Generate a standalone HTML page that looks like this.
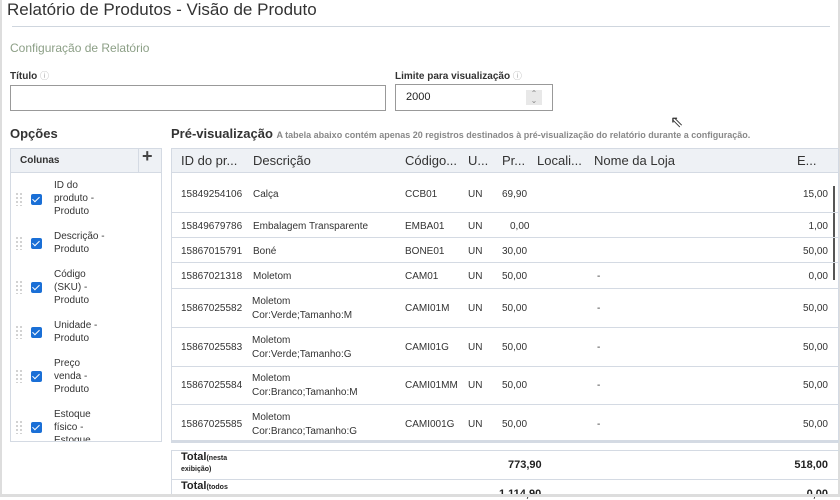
<!DOCTYPE html>
<html><head><meta charset="utf-8"><style>
*{margin:0;padding:0;box-sizing:border-box}
body{width:840px;height:497px;overflow:hidden;background:#fff;font-family:"Liberation Sans",Arial,sans-serif;color:#333;position:relative}
.a{position:absolute;white-space:nowrap}
.frame{position:absolute;left:0;top:0;width:840px;height:497px;border-left:2px solid #ddd;border-right:2px solid #ddd;border-bottom:3px solid #ddd}
.lbl{font-size:10px;font-weight:bold;color:#333}
.info{font-size:9px;color:#aaa;font-weight:normal}
.inp{position:absolute;border:1px solid #999;background:#fff}
.cb{position:absolute;left:31px;width:11px;height:11px;background:#1a6fd6;border-radius:2px}
.cb:after{content:"";position:absolute;left:3px;top:1px;width:3px;height:6px;border:solid #fff;border-width:0 1.5px 1.5px 0;transform:rotate(45deg)}
.dr{position:absolute;left:15px;width:8px;height:14px;background-image:radial-gradient(circle,#666 0.7px,transparent 0.8px);background-size:4px 4px}
.it{position:absolute;left:54px;font-size:10px;line-height:13px;color:#333}
.td{position:absolute;font-size:10px;color:#333;white-space:nowrap}
.hl{position:absolute;left:171px;width:667px;height:1px;background:#d4dae3}
.th{position:absolute;top:153px;font-size:13px;color:#333}
.r{position:absolute;left:0;top:2px;width:840px;height:300px}
</style></head><body>
<div class="frame"></div>
<div class="a" style="left:7px;top:0px;font-size:17px;color:#333">Relatório de Produtos - Visão de Produto</div>
<div class="a" style="left:12px;top:26px;width:818px;height:1px;background:#cfd6de"></div>
<div class="a" style="left:10px;top:41px;font-size:12px;color:#8c9f86">Configuração de Relatório</div>
<div class="a lbl" style="left:10px;top:69px">Título <span class="info">ⓘ</span></div>
<div class="inp" style="left:10px;top:85px;width:376px;height:26px"></div>
<div class="a lbl" style="left:395px;top:69px">Limite para visualização <span class="info">ⓘ</span></div>
<div class="inp" style="left:395px;top:84px;width:158px;height:27px"></div>
<div class="a" style="left:406px;top:91px;font-size:11px;color:#222">2000</div>
<div class="a" style="left:526px;top:90px;width:16px;height:15px;background:#e8e8e8;font-size:8px;color:#888;text-align:center;line-height:7px">⌃<br>⌄</div>
<div class="a" style="left:670px;top:112px;font-size:16px;color:#333">⇖</div>
<div class="a" style="left:10px;top:126px;font-size:13px;font-weight:bold">Opções</div>
<div class="a" style="left:171px;top:126px;font-size:13px;font-weight:bold">Pré-visualização <span style="font-size:9px;color:#888">A tabela abaixo contém apenas 20 registros destinados à pré-visualização do relatório durante a configuração.</span></div>

<div class="a" style="left:10px;top:148px;width:152px;height:294px;border:1px solid #d4dae3"></div>
<div class="a" style="left:11px;top:149px;width:150px;height:24px;background:#eef1f5;border-bottom:1px solid #d4dae3"></div>
<div class="a" style="left:138px;top:149px;width:1px;height:24px;background:#d4dae3"></div>
<div class="a" style="left:20px;top:155px;font-size:10px;font-weight:bold;color:#333">Colunas</div>
<div class="a" style="left:142px;top:146px;font-size:18px;font-weight:bold;color:#444">+</div>

<div class="dr" style="top:192px"></div><div class="cb" style="top:194px"></div>
<div class="it" style="top:179px">ID do<br>produto -<br>Produto</div>
<div class="dr" style="top:236px"></div><div class="cb" style="top:238px"></div>
<div class="it" style="top:230px">Descrição -<br>Produto</div>
<div class="dr" style="top:280px"></div><div class="cb" style="top:282px"></div>
<div class="it" style="top:268px">Código<br>(SKU) -<br>Produto</div>
<div class="dr" style="top:325px"></div><div class="cb" style="top:327px"></div>
<div class="it" style="top:319px">Unidade -<br>Produto</div>
<div class="dr" style="top:369px"></div><div class="cb" style="top:371px"></div>
<div class="it" style="top:357px">Preço<br>venda -<br>Produto</div>
<div style="position:absolute;left:11px;top:400px;width:150px;height:41px;overflow:hidden">
<div class="dr" style="top:20px;left:4px"></div><div class="cb" style="top:22px;left:20px"></div>
<div class="it" style="top:8px;left:43px">Estoque<br>físico -<br>Estoque</div></div>

<div class="a" style="left:171px;top:148px;width:668px;height:295px;border:1px solid #d4dae3;border-bottom:3px solid #d4dae3"></div>
<div class="a" style="left:172px;top:149px;width:666px;height:24px;background:#eef1f5;border-bottom:1px solid #d4dae3"></div>
<div class="th" style="left:181px">ID do pr...</div>
<div class="th" style="left:253px">Descrição</div>
<div class="th" style="left:405px">Código...</div>
<div class="th" style="left:468px">U...</div>
<div class="th" style="left:502px">Pr...</div>
<div class="th" style="left:537px">Locali...</div>
<div class="th" style="left:594px">Nome da Loja</div>
<div class="th" style="left:797px">E...</div>
<div class="a" style="left:833px;top:186px;width:2px;height:94px;background:#555"></div>

<div class="hl" style="top:212px"></div><div class="hl" style="top:237px"></div><div class="hl" style="top:262px"></div>
<div class="hl" style="top:288px"></div><div class="hl" style="top:327px"></div><div class="hl" style="top:366px"></div><div class="hl" style="top:404px"></div>

<div class="r">
<div class="td" style="left:181px;top:187px">15849254106</div><div class="td" style="left:253px;top:187px">Calça</div><div class="td" style="left:405px;top:187px">CCB01</div><div class="td" style="left:468px;top:187px">UN</div><div class="td" style="left:502px;top:187px">69,90</div><div class="td" style="right:12px;top:187px">15,00</div>
<div class="td" style="left:181px;top:219px">15849679786</div><div class="td" style="left:253px;top:219px">Embalagem Transparente</div><div class="td" style="left:405px;top:219px">EMBA01</div><div class="td" style="left:468px;top:219px">UN</div><div class="td" style="left:510px;top:219px">0,00</div><div class="td" style="right:12px;top:219px">1,00</div>
<div class="td" style="left:181px;top:244px">15867015791</div><div class="td" style="left:253px;top:244px">Boné</div><div class="td" style="left:405px;top:244px">BONE01</div><div class="td" style="left:468px;top:244px">UN</div><div class="td" style="left:502px;top:244px">30,00</div><div class="td" style="right:12px;top:244px">50,00</div>
<div class="td" style="left:181px;top:269px">15867021318</div><div class="td" style="left:253px;top:269px">Moletom</div><div class="td" style="left:405px;top:269px">CAM01</div><div class="td" style="left:468px;top:269px">UN</div><div class="td" style="left:502px;top:269px">50,00</div><div class="td" style="left:597px;top:269px">-</div><div class="td" style="right:12px;top:269px">0,00</div>
</div>

<div class="td" style="left:181px;top:303px">15867025582</div><div class="td" style="left:252px;top:295px;line-height:14px">Moletom<br>Cor:Verde;Tamanho:M</div><div class="td" style="left:405px;top:303px">CAMI01M</div><div class="td" style="left:468px;top:303px">UN</div><div class="td" style="left:502px;top:303px">50,00</div><div class="td" style="left:597px;top:303px">-</div><div class="td" style="right:12px;top:303px">50,00</div>
<div class="td" style="left:181px;top:342px">15867025583</div><div class="td" style="left:252px;top:334px;line-height:14px">Moletom<br>Cor:Verde;Tamanho:G</div><div class="td" style="left:405px;top:342px">CAMI01G</div><div class="td" style="left:468px;top:342px">UN</div><div class="td" style="left:502px;top:342px">50,00</div><div class="td" style="left:597px;top:342px">-</div><div class="td" style="right:12px;top:342px">50,00</div>
<div class="td" style="left:181px;top:380px">15867025584</div><div class="td" style="left:252px;top:372px;line-height:14px">Moletom<br>Cor:Branco;Tamanho:M</div><div class="td" style="left:405px;top:380px">CAMI01MM</div><div class="td" style="left:468px;top:380px">UN</div><div class="td" style="left:502px;top:380px">50,00</div><div class="td" style="left:597px;top:380px">-</div><div class="td" style="right:12px;top:380px">50,00</div>
<div class="td" style="left:181px;top:419px">15867025585</div><div class="td" style="left:252px;top:411px;line-height:14px">Moletom<br>Cor:Branco;Tamanho:G</div><div class="td" style="left:405px;top:419px">CAMI001G</div><div class="td" style="left:468px;top:419px">UN</div><div class="td" style="left:502px;top:419px">50,00</div><div class="td" style="left:597px;top:419px">-</div><div class="td" style="right:12px;top:419px">50,00</div>

<div class="a" style="left:171px;top:450px;width:668px;height:47px;border-left:1px solid #d4dae3;border-top:1px solid #d4dae3"></div>
<div class="hl" style="top:479px"></div>
<div class="a" style="left:181px;top:451px;font-size:11px;font-weight:bold;color:#222">Total<span style="font-size:7px">(nesta</span></div>
<div class="a" style="left:181px;top:466px;font-size:7px;font-weight:bold;color:#222">exibição)</div>
<div class="a" style="left:508px;top:459px;font-size:11px;font-weight:bold;color:#222">773,90</div>
<div class="a" style="right:12px;top:459px;font-size:11px;font-weight:bold;color:#222">518,00</div>
<div class="a" style="left:181px;top:480px;font-size:11px;font-weight:bold;color:#222">Total<span style="font-size:7px">(todos</span></div>
<div class="a" style="left:499px;top:488px;font-size:11px;font-weight:bold;color:#222">1.114,90</div>
<div class="a" style="right:12px;top:488px;font-size:11px;font-weight:bold;color:#222">0,00</div>
<div class="a" style="left:0;top:494px;width:840px;height:3px;background:#ddd"></div>
</body></html>
